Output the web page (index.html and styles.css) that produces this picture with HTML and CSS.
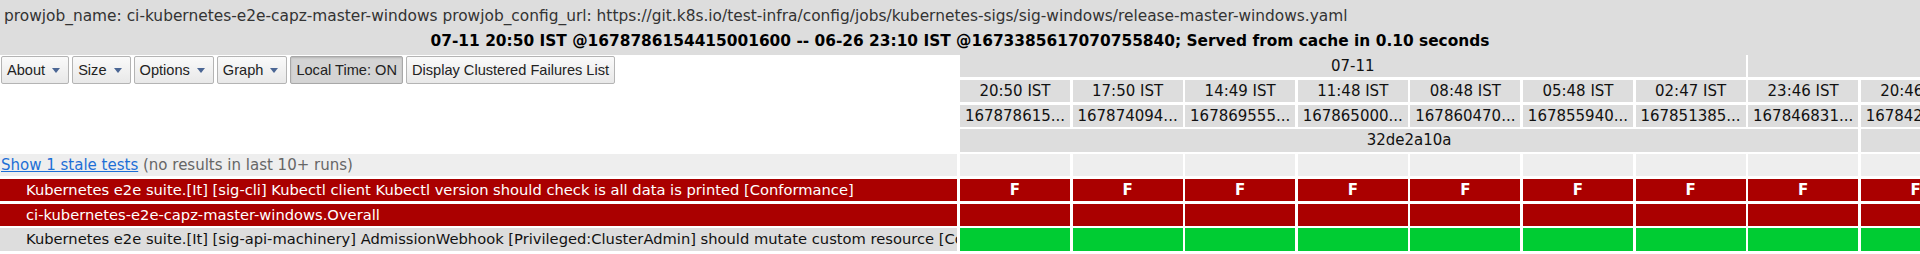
FILE: index.html
```html
<!DOCTYPE html>
<html lang="en">
<head>
  <meta charset="UTF-8">
  <title>TestGrid - ci-kubernetes-e2e-capz-master-windows</title>
  <link rel="stylesheet" href="styles.css">
</head>
<body>
  <div class="info">
    <div class="job">prowjob_name: ci-kubernetes-e2e-capz-master-windows prowjob_config_url: https://git.k8s.io/test-infra/config/jobs/kubernetes-sigs/sig-windows/release-master-windows.yaml</div>
    <div class="summary">07-11 20:50 IST @1678786154415001600 -- 06-26 23:10 IST @1673385617070755840; Served from cache in 0.10 seconds</div>
  </div>

  <div class="viewport">
    <div class="grid">
      <div class="corner">
        <div class="toolbar">
          <button class="btn">About<span class="caret"></span></button>
          <button class="btn">Size<span class="caret"></span></button>
          <button class="btn">Options<span class="caret"></span></button>
          <button class="btn">Graph<span class="caret"></span></button>
          <button class="btn on">Local Time: ON</button>
          <button class="btn">Display Clustered Failures List</button>
        </div>
      </div>

      <!-- dates -->
      <div class="hd span7">07-11</div>
      <div class="hd span2"></div>

      <!-- times -->
      <div class="hd">20:50 IST</div>
      <div class="hd">17:50 IST</div>
      <div class="hd">14:49 IST</div>
      <div class="hd">11:48 IST</div>
      <div class="hd">08:48 IST</div>
      <div class="hd">05:48 IST</div>
      <div class="hd">02:47 IST</div>
      <div class="hd">23:46 IST</div>
      <div class="hd">20:46 IST</div>

      <!-- build ids -->
      <div class="hd">167878615...</div>
      <div class="hd">167874094...</div>
      <div class="hd">167869555...</div>
      <div class="hd">167865000...</div>
      <div class="hd">167860470...</div>
      <div class="hd">167855940...</div>
      <div class="hd">167851385...</div>
      <div class="hd">167846831...</div>
      <div class="hd">167842276...</div>

      <!-- commits -->
      <div class="hd span8">32de2a10a</div>
      <div class="hd"></div>

      <!-- stale -->
      <div class="stale"><a href="#">Show 1 stale tests</a> (no results in last 10+ runs)</div>
      <div class="cell empty"></div>
      <div class="cell empty"></div>
      <div class="cell empty"></div>
      <div class="cell empty"></div>
      <div class="cell empty"></div>
      <div class="cell empty"></div>
      <div class="cell empty"></div>
      <div class="cell empty"></div>
      <div class="cell empty"></div>

      <div class="name fail">Kubernetes e2e suite.[It] [sig-cli] Kubectl client Kubectl version should check is all data is printed [Conformance]</div>
      <div class="cell fail">F</div>
      <div class="cell fail">F</div>
      <div class="cell fail">F</div>
      <div class="cell fail">F</div>
      <div class="cell fail">F</div>
      <div class="cell fail">F</div>
      <div class="cell fail">F</div>
      <div class="cell fail">F</div>
      <div class="cell fail">F</div>

      <div class="name fail">ci-kubernetes-e2e-capz-master-windows.Overall</div>
      <div class="cell fail"></div>
      <div class="cell fail"></div>
      <div class="cell fail"></div>
      <div class="cell fail"></div>
      <div class="cell fail"></div>
      <div class="cell fail"></div>
      <div class="cell fail"></div>
      <div class="cell fail"></div>
      <div class="cell fail"></div>

      <div class="name">Kubernetes e2e suite.[It] [sig-api-machinery] AdmissionWebhook [Privileged:ClusterAdmin] should mutate custom resource [Conformance]</div>
      <div class="cell pass"></div>
      <div class="cell pass"></div>
      <div class="cell pass"></div>
      <div class="cell pass"></div>
      <div class="cell pass"></div>
      <div class="cell pass"></div>
      <div class="cell pass"></div>
      <div class="cell pass"></div>
      <div class="cell pass"></div>
    </div>
  </div>
</body>
</html>
```

FILE: styles.css
```css
body {
  margin: 0;
  padding: 0;
  background: #fff;
  font-family: "DejaVu Sans", Verdana, sans-serif;
  font-size: 14px;
  color: #000;
  overflow: hidden;
}

.info {
  background-color: #ddd;
  height: 55px;
  padding: 4px 0 0 0;
  box-sizing: border-box;
}

.job {
  color: #333;
  padding-left: 4px;
  font-size: 15.4px;
  line-height: 24px;
  white-space: nowrap;
}

.summary {
  font-size: 15.4px;
  font-weight: bold;
  text-align: center;
  line-height: 26px;
  white-space: nowrap;
}

.viewport {
  width: 1920px;
  overflow: hidden;
}

.grid {
  display: grid;
  grid-template-columns: 957.4px repeat(9, 110px);
  grid-auto-rows: 22.2px;
  column-gap: 2.6px;
  row-gap: 2.6px;
  width: max-content;
}

.corner {
  grid-row: span 4;
  background: #fff;
}

.toolbar {
  display: flex;
  gap: 3px;
  padding: 1px 0 0 1px;
}

.btn {
  display: flex;
  align-items: center;
  height: 28px;
  padding: 0 5px;
  font-family: "Liberation Sans", Arial, sans-serif;
  font-size: 14.6px;
  color: #222;
  background: linear-gradient(#fafafa, #e8e8e8);
  border: 1px solid #b4b4b4;
  border-radius: 2px;
  cursor: pointer;
}

.btn.on {
  background: #d4d4d4;
  border-color: #a8a8a8;
  box-shadow: inset 0 1px 2px rgb(0 0 0 / 15%);
}

.caret {
  width: 0;
  height: 0;
  margin: 0 3px 0 7px;
  border-left: 4.5px solid transparent;
  border-right: 4.5px solid transparent;
  border-top: 5px solid #4b6694;
}

.hd {
  background: #ddd;
  text-align: center;
  line-height: 22.2px;
  font-size: 15px;
  color: #111;
  white-space: nowrap;
  overflow: hidden;
}

.span7 {
  grid-column: span 7;
}

.span8 {
  grid-column: span 8;
}

.span2 {
  grid-column: span 2;
}

.stale {
  background: #eee;
  line-height: 22.2px;
  padding-left: 1px;
  font-size: 15px;
  color: #666;
  white-space: nowrap;
}

.stale a {
  color: #1d6fd6;
}

.name {
  background: #ddd;
  color: #111;
  line-height: 22.2px;
  padding-left: 26px;
  font-size: 14.7px;
  white-space: nowrap;
  overflow: hidden;
}

.name.fail {
  color: #fff;
}

.cell {
  text-align: center;
  line-height: 22.2px;
  font-size: 15px;
  font-weight: bold;
  color: #fff;
}

.empty {
  background: #eee;
}

.fail {
  background: #a00;
}

.pass {
  background: #0c3;
}
```
